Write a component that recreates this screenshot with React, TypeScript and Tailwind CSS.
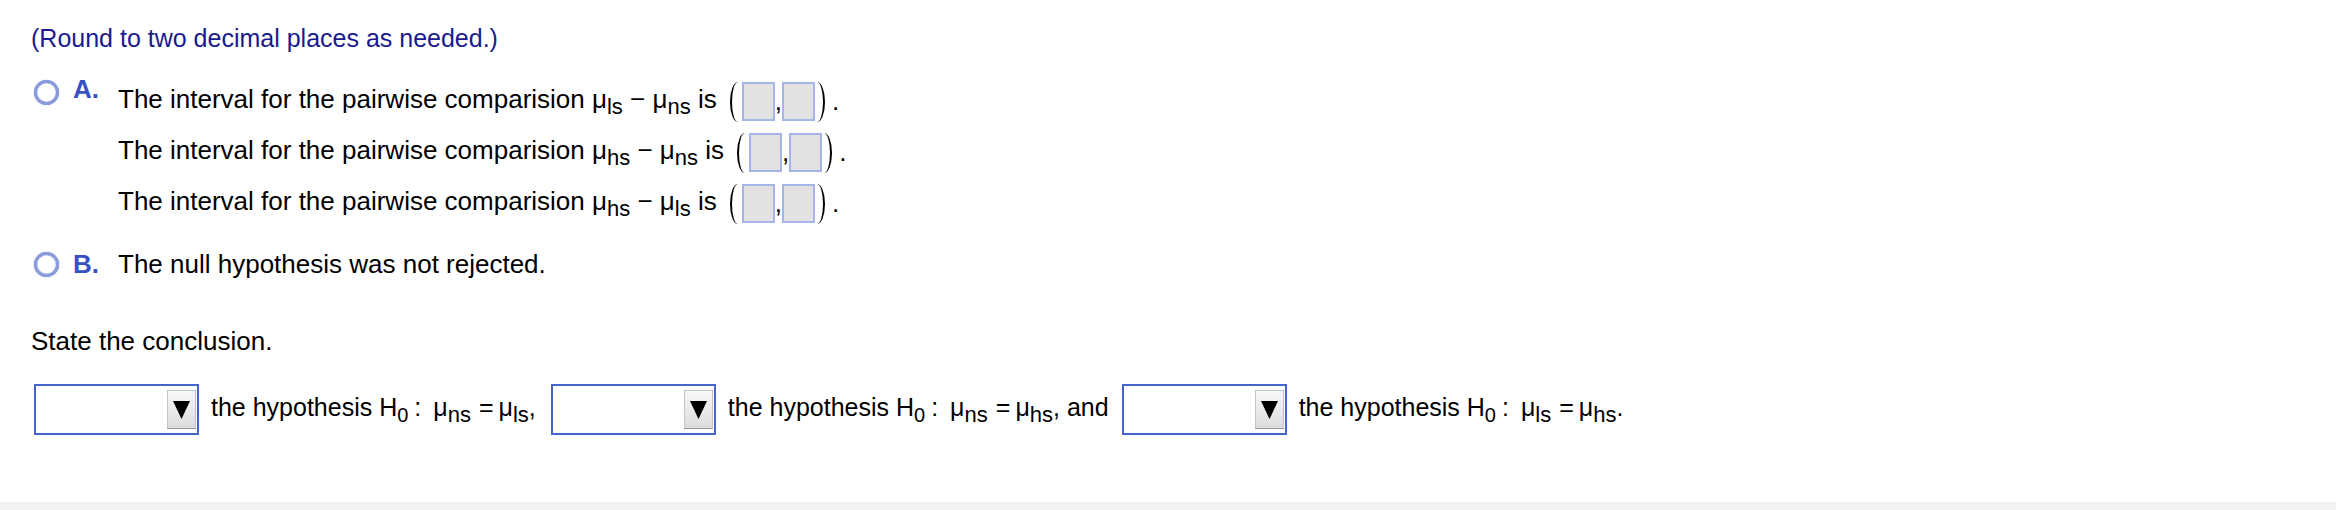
import type { ReactNode } from 'react';

function Sub({ children, size = 'text-[22px]' }: { children: ReactNode; size?: string }) {
    return <span className={`align-[-6px] ${size}`}>{children}</span>;
}

function Mu({ s }: { s: string }) {
    return (
        <span>
            μ<Sub>{s}</Sub>
        </span>
    );
}

function Radio() {
    return (
        <div className="h-[25px] w-[25px] shrink-0 rounded-full border-[3px] border-[#8a9bdc] bg-white shadow-[inset_0_0_1px_#5a6fcf,0_0_1px_#5a6fcf]" />
    );
}

function AnswerBox() {
    return <div className="h-[39px] w-[33px] shrink-0 border-2 border-[#a4b6e8] bg-[#e2e2e2]" />;
}

function IntervalLine({ a, b }: { a: string; b: string }) {
    return (
        <div className="flex h-[51px] items-center whitespace-pre">
            <span>
                The interval for the pairwise comparision <Mu s={a} /> − <Mu s={b} /> is
            </span>
            {/* Tall brackets around the two entry boxes */}
            <span className="ml-[13px] h-[40px] w-[8px] shrink-0 rounded-l-[100%_50%] border-l-2 border-black" />
            <span className="ml-[4px]">
                <AnswerBox />
            </span>
            <span>,</span>
            <AnswerBox />
            <span className="ml-[2px] h-[40px] w-[8px] shrink-0 rounded-r-[100%_50%] border-r-2 border-black" />
            <span className="ml-[7px]">.</span>
        </div>
    );
}

function Dropdown() {
    return (
        <div className="flex h-[51px] w-[165px] shrink-0 items-center justify-end border-2 border-[#4466cc] bg-white pr-[1px]">
            <div className="flex h-[39px] w-[29px] items-center justify-center border border-[#c4c4c4] border-b-[#9a9a9a] bg-linear-to-b from-[#f8f8f8] to-[#dcdcdc]">
                <svg width="17" height="18" viewBox="0 0 17 18">
                    <path d="M0 0H17L8.5 18Z" fill="#000" />
                </svg>
            </div>
        </div>
    );
}

function Hypothesis({ a, b, tail }: { a: string; b: string; tail: string }) {
    return (
        <span className="whitespace-pre">
            the hypothesis H<Sub size="text-[20px]">0</Sub>
            <span className="ml-[6px] mr-[12px]">:</span>
            <Mu s={a} />
            <span className="ml-[8px] mr-[5px]">=</span>
            <Mu s={b} />
            {tail}
        </span>
    );
}

export default function App() {
    return (
        <div className="flex min-h-[510px] flex-col bg-white font-['Liberation_Sans',Arial,sans-serif] text-[26px] text-black">
            {/* Instruction */}
            <div className="flex h-[73px] items-center pl-[31px] pt-[4px] text-[25px] text-[#1a1a8e]">
                (Round to two decimal places as needed.)
            </div>

            {/* Option A */}
            <div className="mt-[3px] flex">
                <div className="mt-[3px] flex h-[26px] w-[118px] shrink-0 items-center pl-[34px]">
                    <Radio />
                    <span className="mb-[5px] ml-[14px] font-bold text-[#3a4fc4]">A.</span>
                </div>
                <div className="flex flex-col">
                    <IntervalLine a="ls" b="ns" />
                    <IntervalLine a="hs" b="ns" />
                    <IntervalLine a="hs" b="ls" />
                </div>
            </div>

            {/* Option B */}
            <div className="mt-[10px] flex h-[51px] items-center">
                <div className="flex w-[118px] shrink-0 items-center pl-[34px]">
                    <Radio />
                    <span className="ml-[14px] font-bold text-[#3a4fc4]">B.</span>
                </div>
                <span>The null hypothesis was not rejected.</span>
            </div>

            <div className="mt-[26px] flex h-[51px] items-center pl-[31px]">State the conclusion.</div>

            {/* Conclusion row */}
            <div className="mt-[17px] flex h-[51px] items-center pl-[34px] text-[25px]">
                <Dropdown />
                <span className="ml-[12px] mr-[15px]">
                    <Hypothesis a="ns" b="ls" tail="," />
                </span>
                <Dropdown />
                <span className="ml-[12px] mr-[13px]">
                    <Hypothesis a="ns" b="hs" tail=", and" />
                </span>
                <Dropdown />
                <span className="ml-[12px]">
                    <Hypothesis a="ls" b="hs" tail="." />
                </span>
            </div>

            <div className="flex-1" />
            <div className="h-[8px] bg-[#f2f2f2]" />
        </div>
    );
}
